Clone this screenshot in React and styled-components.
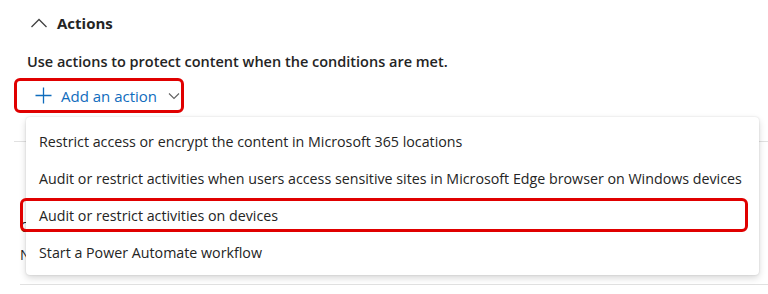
import React from 'react';
import styled, { createGlobalStyle } from 'styled-components';

const GlobalStyle = createGlobalStyle`
  html, body {
    margin: 0;
    padding: 0;
    background: #ffffff;
  }
  body {
    font-family: "Open Sans", "Noto Sans", sans-serif;
    color: #242424;
  }
`;

const Page = styled.div`
  position: relative;
  width: 768px;
  height: 294px;
  overflow: hidden;
  background: #fff;
`;

const SectionHeader = styled.div`
  display: flex;
  align-items: center;
  gap: 9px;
  padding: 12px 0 0 30px;
  height: 22px;
`;

const SectionTitle = styled.h2`
  margin: 0;
  font-size: 15px;
  font-weight: 700;
  color: #242424;
`;

const Description = styled.p`
  margin: 18px 0 0 27px;
  font-size: 14.5px;
  font-weight: 600;
  line-height: 20px;
  color: #242424;
`;

const AddButton = styled.button`
  display: flex;
  align-items: center;
  gap: 9px;
  margin: 6px 0 0 14px;
  box-sizing: border-box;
  width: 170px;
  height: 35px;
  padding: 0 0 0 18px;
  border: 3px solid #e00000;
  border-radius: 6px;
  background: #fff;
  color: #0f6cbd;
  font-family: inherit;
  font-size: 15px;
  cursor: pointer;
`;

const Under = styled.div`
  margin: 28px 0 0 14px;
  border-top: 1px solid #e1e1e1;
`;

const UnderBody = styled.div`
  display: flex;
  flex-direction: column;
  gap: 8px;
  margin-left: 6px;
  padding: 75px 0 19px;
  border-bottom: 1px solid #e1e1e1;
`;

const UnderText = styled.div`
  font-size: 14px;
  line-height: 20px;
  color: #242424;
`;

const Menu = styled.ul`
  position: absolute;
  left: 26px;
  top: 117px;
  width: 733px;
  margin: 0;
  padding: 6px 0 4px;
  list-style: none;
  background: #fff;
  border-radius: 4px;
  box-shadow: 0 0 2px rgba(0, 0, 0, 0.14), 0 3px 7px rgba(0, 0, 0, 0.16);
`;

const MenuItem = styled.li`
  position: relative;
  height: 37px;
  display: flex;
  align-items: center;
  padding-left: 13px;
  font-size: 14.25px;
  color: #242424;
  white-space: nowrap;
`;

const Highlight = styled.span`
  position: absolute;
  left: -6px;
  right: 11px;
  top: 1px;
  height: 34px;
  box-sizing: border-box;
  border: 3px solid #e00000;
  border-radius: 6px;
  pointer-events: none;
`;

const ChevronUp = () => (
  <svg width="18" height="12" viewBox="0 0 18 12" fill="none">
    <path d="M1.5 10 L9 2.5 L16.5 10" stroke="#424242" strokeWidth="1.3" />
  </svg>
);

const Plus = () => (
  <svg width="17" height="17" viewBox="0 0 17 17" fill="none">
    <path d="M8.5 0.5 V16.5 M0.5 8.5 H16.5" stroke="#0f6cbd" strokeWidth="1.3" />
  </svg>
);

const ChevronDown = () => (
  <svg width="12" height="8" viewBox="0 0 12 8" fill="none" style={{ marginLeft: 2 }}>
    <path d="M1 1.5 L6 6.5 L11 1.5" stroke="#616161" strokeWidth="1.1" />
  </svg>
);

const items = [
  'Restrict access or encrypt the content in Microsoft 365 locations',
  'Audit or restrict activities when users access sensitive sites in Microsoft Edge browser on Windows devices',
  'Audit or restrict activities on devices',
  'Start a Power Automate workflow',
];

const App = () => {
  return (
    <Page>
      <GlobalStyle />
      <SectionHeader>
        <ChevronUp />
        <SectionTitle>Actions</SectionTitle>
      </SectionHeader>
      <Description>Use actions to protect content when the conditions are met.</Description>
      <AddButton>
        <Plus />
        Add an action
        <ChevronDown />
      </AddButton>
      <Under>
        <UnderBody>
          <UnderText>Choose</UnderText>
          <UnderText>Notify</UnderText>
        </UnderBody>
      </Under>
      <Menu>
        {items.map((t, i) => (
          <MenuItem key={t}>
            {t}
            {i === 2 && <Highlight />}
          </MenuItem>
        ))}
      </Menu>
    </Page>
  );
};

export default App;
